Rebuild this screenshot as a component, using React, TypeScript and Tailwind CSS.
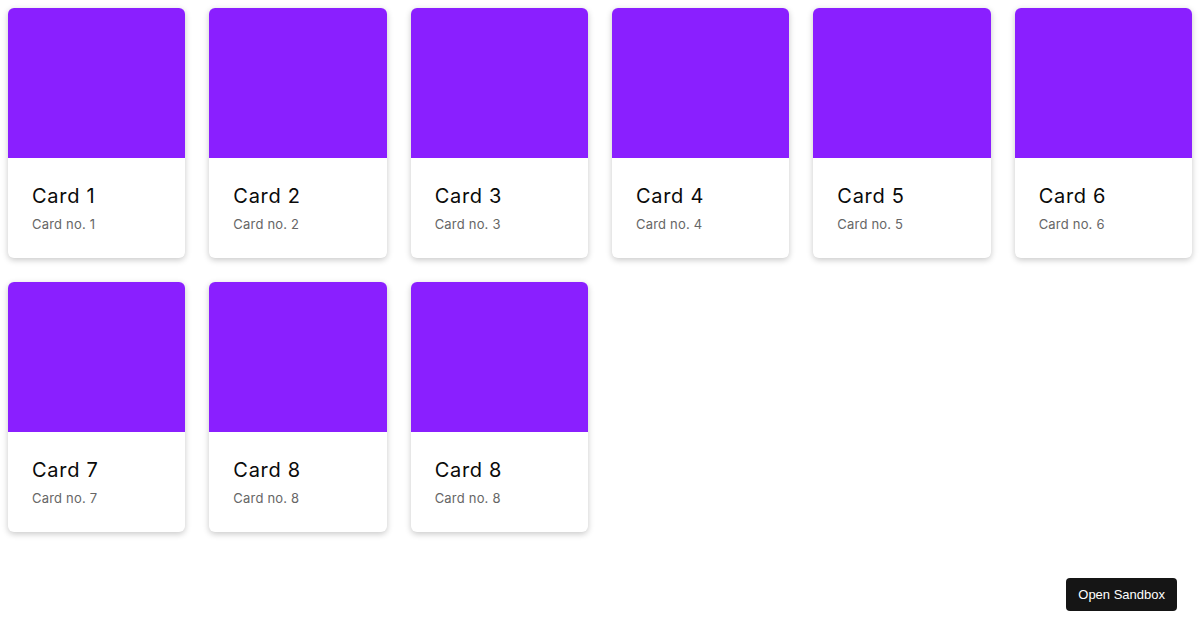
import React from "react";

const cards = [
  ["Card 1", "Card no. 1"],
  ["Card 2", "Card no. 2"],
  ["Card 3", "Card no. 3"],
  ["Card 4", "Card no. 4"],
  ["Card 5", "Card no. 5"],
  ["Card 6", "Card no. 6"],
  ["Card 7", "Card no. 7"],
  ["Card 8", "Card no. 8"],
  ["Card 8", "Card no. 8"],
];

export default function App() {
  return (
    <div className="relative w-[1200px] h-[630px] bg-white overflow-hidden" style={{ fontFamily: "Inter, 'Noto Sans', sans-serif" }}>
      <div className="grid grid-cols-6 gap-6 p-2">
        {cards.map(([t, s], i) => (
          <div key={i} className="rounded-md overflow-hidden bg-white shadow-[0_2px_6px_rgba(0,0,0,0.22)]">
            <div className="h-[150px] bg-[#8a1fff]" />
            <div className="p-6">
              <div className="text-[20px] leading-7 tracking-[0.7px] text-[#0a0a0a]">{t}</div>
              <div className="mt-1 text-[13px] leading-5 tracking-[0.2px] text-[#666]">{s}</div>
            </div>
          </div>
        ))}
      </div>
      <div
        className="absolute right-[23px] bottom-[19px] h-[33px] px-[12px] flex items-center rounded-[4px] bg-[#151515] text-white text-[13px]"
        style={{ fontFamily: "'Liberation Sans', Arial, sans-serif" }}
      >
        Open Sandbox
      </div>
    </div>
  );
}
